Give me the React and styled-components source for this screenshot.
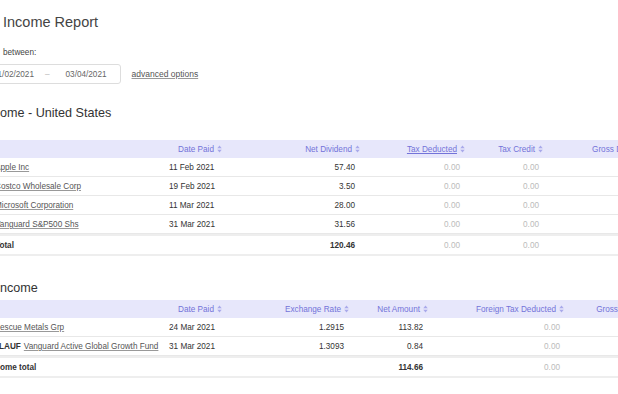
import React from "react";
import styled, { createGlobalStyle } from "styled-components";

const Global = createGlobalStyle`
  html, body { margin: 0; padding: 0; background: #fff; }
  body { font-family: "Liberation Sans", Arial, sans-serif; overflow: hidden; }
`;

const Page = styled.div`
  width: 618px;
  height: 394px;
  overflow: hidden;
`;

const Content = styled.div`
  margin-left: -5px;
  padding-top: 14px;
  display: flex;
  flex-direction: column;
  align-items: flex-start;
`;

const Title = styled.h1`
  margin: 0 0 0 8px;
  font-size: 14.5px;
  line-height: 17px;
  font-weight: normal;
  color: #444;
`;

const Label = styled.div`
  margin: 17px 0 0 8px;
  font-size: 8.2px;
  line-height: 10px;
  color: #444;
`;

const DateRow = styled.div`
  margin: 6px 0 0 -12px;
  display: flex;
  align-items: center;
`;

const DateBox = styled.div`
  box-sizing: border-box;
  height: 20px;
  border: 1px solid #ddd;
  border-radius: 3px;
  display: flex;
  align-items: center;
  padding: 0 13px 0 9px;
  font-size: 8.2px;
  color: #666;
`;

const Dash = styled.span`
  color: #bbb;
  margin: 0 16px 0 11px;
`;

const OptionsLink = styled.a`
  margin-left: 11px;
  font-size: 8.5px;
  color: #555;
  text-decoration: underline;
  text-decoration-color: #999;
  cursor: pointer;
`;

const Heading = styled.h2`
  margin: ${(p) => p.$top}px 0 0 ${(p) => p.$left}px;
  font-size: 12.6px;
  line-height: 15px;
  font-weight: normal;
  color: #333;
`;

const Table = styled.div`
  margin-top: ${(p) => p.$top}px;
  display: flex;
  flex-direction: column;
  font-size: 8.2px;
`;

const Row = styled.div`
  box-sizing: border-box;
  display: grid;
  grid-template-columns: ${(p) => p.$cols};
  align-items: center;
  height: ${(p) => (p.$total ? 22 : 19)}px;
  padding-top: 1px;
  border-bottom: ${(p) => (p.$total ? 2 : 1)}px solid ${(p) => (p.$total ? "#eee" : "#e8e8e8")};
  border-top: ${(p) => (p.$total ? "2px solid #eee" : "none")};
  color: #333;
  font-weight: ${(p) => (p.$total ? "bold" : "normal")};
  white-space: nowrap;
`;

const HeadRow = styled.div`
  display: grid;
  grid-template-columns: ${(p) => p.$cols};
  align-items: center;
  height: 18px;
  background: #e7e7fb;
  color: #7373d9;
  white-space: nowrap;
`;

const Th = styled.div`
  display: flex;
  align-items: center;
  justify-content: ${(p) => (p.$center ? "center" : "flex-end")};
  padding-right: ${(p) => (p.$center ? 0 : 5)}px;
`;

const ThText = styled.span`
  text-decoration: ${(p) => (p.$underline ? "underline" : "none")};
`;

const Cell = styled.div`
  padding-left: ${(p) => p.$pad || 0}px;
  padding-right: ${(p) => p.$pad || 0}px;
  text-align: ${(p) => p.$align || "left"};
  color: ${(p) => (p.$muted ? "#bbb" : "inherit")};
  font-weight: ${(p) => (p.$muted ? "normal" : "inherit")};
`;

const NameLink = styled.a`
  color: #555;
  text-decoration: underline;
  text-decoration-color: #999;
  cursor: pointer;
`;

const Ticker = styled.b`
  color: #333;
  margin-right: 3px;
  margin-left: -1px;
`;

const SortIcon = () => (
  <svg width="5" height="8" viewBox="0 0 5 8" style={{ marginLeft: 3 }}>
    <path d="M0.3 3.3 L2.5 0.6 L4.7 3.3 Z" fill="#a9a9ea" />
    <path d="M0.3 4.7 L2.5 7.4 L4.7 4.7 Z" fill="#a9a9ea" />
  </svg>
);

const Header = ({ children, center, underline }) => (
  <Th $center={center}>
    <ThText $underline={underline}>{children}</ThText>
    <SortIcon />
  </Th>
);

const usCols = "168px 74px 128px 105px 78px 113px";
const fxCols = "168px 74px 117px 79px 136px 92px";

const usRows = [
  ["Apple Inc", "11 Feb 2021", "57.40"],
  ["Costco Wholesale Corp", "19 Feb 2021", "3.50"],
  ["Microsoft Corporation", "11 Mar 2021", "28.00"],
  ["Vanguard S&P500 Shs", "31 Mar 2021", "31.56"],
];

const fxRows = [
  [null, "escue Metals Grp", "24 Mar 2021", "1.2915", "113.82"],
  ["LAUF", "Vanguard Active Global Growth Fund", "31 Mar 2021", "1.3093", "0.84"],
];

export default function App() {
  return (
    <Page>
      <Global />
      <Content>
        <Title>Income Report</Title>
        <Label>between:</Label>
        <DateRow>
          <DateBox>
            <span>01/02/2021</span>
            <Dash>–</Dash>
            <span>03/04/2021</span>
          </DateBox>
          <OptionsLink>advanced options</OptionsLink>
        </DateRow>

        <Heading $top={21.5} $left={-11.8}>Income - United States</Heading>
        <Table $top={19.5}>
          <HeadRow $cols={usCols}>
            <div />
            <Header center>Date Paid</Header>
            <Header>Net Dividend</Header>
            <Header underline>Tax Deducted</Header>
            <Header>Tax Credit</Header>
            <Header>Gross Dividend</Header>
          </HeadRow>
          {usRows.map(([name, date, net]) => (
            <Row $cols={usCols} key={name}>
              <Cell><NameLink>{name}</NameLink></Cell>
              <Cell $pad={6}>{date}</Cell>
              <Cell $align="right" $pad={10}>{net}</Cell>
              <Cell $align="right" $pad={10} $muted>0.00</Cell>
              <Cell $align="right" $pad={9} $muted>0.00</Cell>
              <Cell $align="right" $pad={10}>{net}</Cell>
            </Row>
          ))}
          <Row $cols={usCols} $total>
            <Cell>Total</Cell>
            <Cell />
            <Cell $align="right" $pad={10}>120.46</Cell>
            <Cell $align="right" $pad={10} $muted>0.00</Cell>
            <Cell $align="right" $pad={9} $muted>0.00</Cell>
            <Cell $align="right" $pad={10}>120.46</Cell>
          </Row>
        </Table>

        <Heading $top={24.5} $left={1.5}>Income</Heading>
        <Table $top={4.5}>
          <HeadRow $cols={fxCols}>
            <div />
            <Header center>Date Paid</Header>
            <Header>Exchange Rate</Header>
            <Header>Net Amount</Header>
            <Header>Foreign Tax Deducted</Header>
            <Header>Gross Amount</Header>
          </HeadRow>
          {fxRows.map(([ticker, name, date, rate, net]) => (
            <Row $cols={fxCols} key={name}>
              <Cell $pad={5}>
                {ticker && <Ticker>{ticker}</Ticker>}
                <NameLink>{name}</NameLink>
              </Cell>
              <Cell $pad={6}>{date}</Cell>
              <Cell $align="right" $pad={10}>{rate}</Cell>
              <Cell $align="right" $pad={10}>{net}</Cell>
              <Cell $align="right" $pad={9} $muted>0.00</Cell>
              <Cell $align="right" $pad={10}>{net}</Cell>
            </Row>
          ))}
          <Row $cols={fxCols} $total>
            <Cell $pad={5}>ome total</Cell>
            <Cell />
            <Cell />
            <Cell $align="right" $pad={10}>114.66</Cell>
            <Cell $align="right" $pad={9} $muted>0.00</Cell>
            <Cell $align="right" $pad={10}>114.66</Cell>
          </Row>
        </Table>
      </Content>
    </Page>
  );
}
